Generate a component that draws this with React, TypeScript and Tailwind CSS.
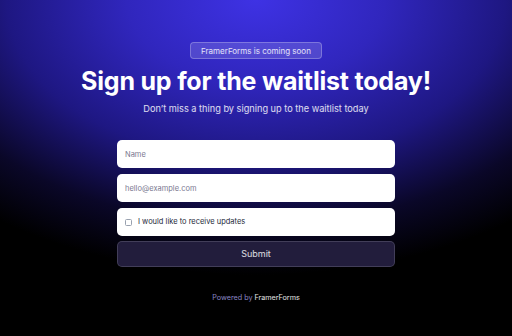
export default function App() {
  return (
    <div
      className="w-full h-screen overflow-hidden flex flex-col items-center bg-black bg-[radial-gradient(ellipse_430px_275px_at_50%_0%,#3e32e4_0%,#3026bd_30%,#1e1782_58%,#0a0728_82%,#000000_100%)]"
      style={{ fontFamily: "Inter, 'Noto Sans', sans-serif" }}
    >
      <div className="mt-[42px] h-[17px] w-[132px] flex items-center justify-center rounded-[4px] border border-white/25 bg-white/15 text-[8px] text-white/85">
        FramerForms is coming soon
      </div>
      <h1 className="mt-[5px] text-[25px] leading-[34px] font-bold tracking-[-0.2px] text-white">
        Sign up for the waitlist today!
      </h1>
      <p className="mt-[4px] text-[9.2px] leading-[14px] text-white/85">
        Don’t miss a thing by signing up to the waitlist today
      </p>
      <form className="mt-[24px] w-[278px] flex flex-col gap-[6px]" onSubmit={(e) => e.preventDefault()}>
        <input
          placeholder="Name"
          className="h-[28px] rounded-[5px] bg-white px-[8px] text-[7.5px] text-gray-700 placeholder:text-[#7a7890] outline-none"
        />
        <input
          placeholder="hello@example.com"
          className="h-[28px] rounded-[5px] bg-white px-[8px] text-[7.5px] text-gray-700 placeholder:text-[#7a7890] outline-none"
        />
        <label className="h-[28px] rounded-[5px] bg-white px-[8px] flex items-center gap-[6px] text-[7.5px] text-gray-800">
          <span className="w-[7px] h-[7px] rounded-[1.5px] border border-gray-400 bg-white" />
          I would like to receive updates
        </label>
        <button
          type="submit"
          className="h-[26px] mt-[-1px] rounded-[5px] border border-white/15 bg-[#221d3c] text-[9px] text-white/85"
        >
          Submit
        </button>
      </form>
      <div className="mt-[26px] text-[7.2px] text-[#8a86c4]">
        Powered by <span className="text-white/90">FramerForms</span>
      </div>
    </div>
  );
}
